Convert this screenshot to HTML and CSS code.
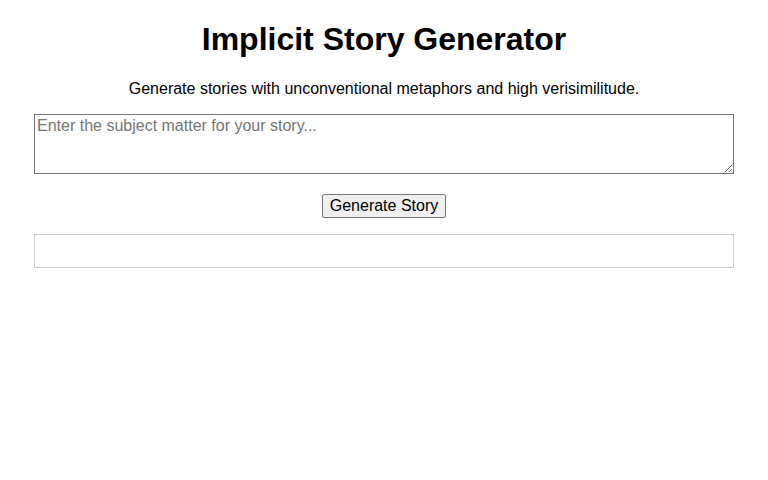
FILE: index.html
```html
<!DOCTYPE html>
<html lang="en">
<head>
  <meta charset="UTF-8" />
  <meta name="viewport" content="width=device-width, initial-scale=1.0"/>
  <title>Implicit Story Generator</title>
  <link rel="stylesheet" href="styles.css">
</head>
<body>
  <div class="container">
    <h1>Implicit Story Generator</h1>
    <p>Generate stories with unconventional metaphors and high verisimilitude.</p>
    <textarea id="subject" placeholder="Enter the subject matter for your story..."></textarea>
    <div class="actions">
      <button id="generateBtn">Generate Story</button>
    </div>
    <div class="story-output" id="storyOutput"></div>
  </div>
</body>
</html>
```

FILE: styles.css
```css
body {
  margin: 0 8px;
  font-family: "Liberation Sans", Arial, sans-serif;
  background: #fff;
  color: #000;
  text-align: center;
}
.container {
  max-width: 700px;
  margin: 0 auto;
}
h1 {
  font-size: 32px;
  margin: 21.44px 0;
}
p {
  font-size: 16px;
  margin: 16px 0;
}
textarea {
  display: block;
  box-sizing: border-box;
  width: 100%;
  height: 60px;
  padding: 2px;
  border: 1px solid #767676;
  font-family: "Liberation Sans", Arial, sans-serif;
  font-size: 16px;
  margin: 0;
}
textarea::placeholder {
  color: #757575;
}
.actions {
  margin: 20px 0 16px;
}
button {
  font-family: "Liberation Sans", Arial, sans-serif;
  font-size: 16px;
  padding: 2px 7px;
  border: 1px solid #767676;
  border-radius: 2px;
  background: #efefef;
  color: #000;
  cursor: pointer;
}
.story-output {
  box-sizing: border-box;
  min-height: 34px;
  border: 1px solid #ccc;
  padding: 16px;
  text-align: left;
}
```
